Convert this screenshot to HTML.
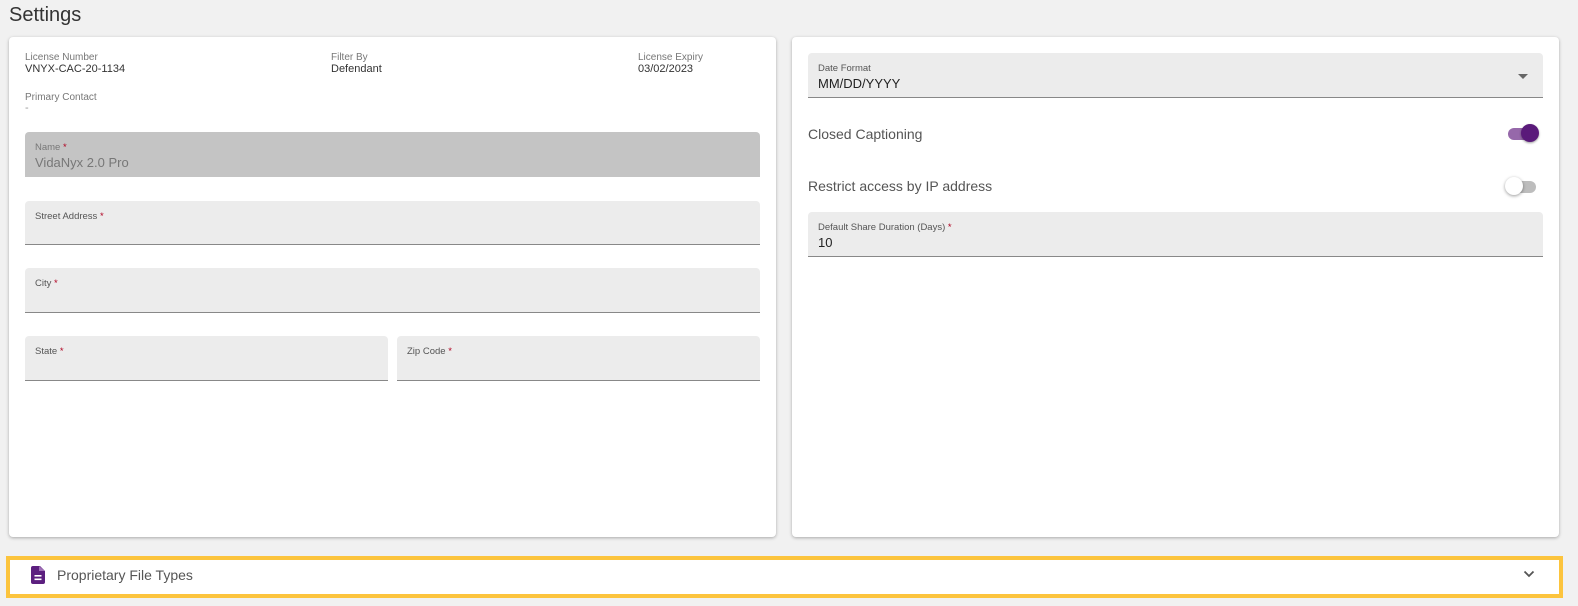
<!DOCTYPE html><html><head><style>
*{box-sizing:border-box;margin:0;padding:0}
body{width:1578px;height:606px;background:#f1f1f1;font-family:"Liberation Sans",sans-serif;position:relative;overflow:hidden;color:#333}
.abs{position:absolute}
.card{position:absolute;background:#fff;border-radius:4px;box-shadow:0 1px 3px rgba(0,0,0,.3)}
.lbl{font-size:10px;color:#777}
.val{font-size:11px;color:#333}
.f{position:absolute;background:#ececec;border-radius:4px 4px 0 0;border-bottom:1px solid #888}
.f .l{position:absolute;left:10px;top:10px;font-size:9.5px;color:#555}
.f .l i{color:#b00020;font-style:normal}
.f .v{position:absolute;left:10px;top:23px;font-size:13px;color:#222}
</style></head><body>
<div class="abs" style="left:9px;top:4px;font-size:20px;color:#333">Settings</div>
<div class="card" style="left:9px;top:37px;width:767px;height:500px"></div>
<div class="card" style="left:792px;top:37px;width:767px;height:500px"></div>
<div class="abs lbl" style="left:25px;top:52px">License Number</div>
<div class="abs val" style="left:25px;top:63px">VNYX-CAC-20-1134</div>
<div class="abs lbl" style="left:331px;top:52px">Filter By</div>
<div class="abs val" style="left:331px;top:63px">Defendant</div>
<div class="abs lbl" style="left:638px;top:52px">License Expiry</div>
<div class="abs val" style="left:638px;top:63px">03/02/2023</div>
<div class="abs lbl" style="left:25px;top:92px">Primary Contact</div>
<div class="abs val" style="left:25px;top:102px;color:#999">-</div>
<div class="f" style="left:25px;top:132px;width:735px;height:45px;background:#c4c4c4;border:none"><span class="l" style="color:#777">Name <i>*</i></span><span class="v" style="color:#777">VidaNyx 2.0 Pro</span></div>
<div class="f" style="left:25px;top:201px;width:735px;height:44px"><span class="l">Street Address <i>*</i></span></div>
<div class="f" style="left:25px;top:268px;width:735px;height:45px"><span class="l">City <i>*</i></span></div>
<div class="f" style="left:25px;top:336px;width:363px;height:45px"><span class="l">State <i>*</i></span></div>
<div class="f" style="left:397px;top:336px;width:363px;height:45px"><span class="l">Zip Code <i>*</i></span></div>
<div class="f" style="left:808px;top:53px;width:735px;height:45px"><span class="l">Date Format</span><span class="v">MM/DD/YYYY</span>
<div class="abs" style="right:15px;top:21px;border-left:5px solid transparent;border-right:5px solid transparent;border-top:5px solid #666"></div></div>
<div class="abs" style="left:808px;top:126px;font-size:14px;color:#555">Closed Captioning</div>
<div class="abs" style="left:808px;top:178px;font-size:14px;color:#555">Restrict access by IP address</div>
<div class="abs" style="left:1508px;top:128px;width:28px;height:12px;border-radius:6px;background:#9668aa"></div>
<div class="abs" style="left:1521px;top:124px;width:18px;height:18px;border-radius:50%;background:#5a1a7a;box-shadow:0 1px 2px rgba(0,0,0,.4)"></div>
<div class="abs" style="left:1508px;top:181px;width:28px;height:12px;border-radius:6px;background:#bdbdbd"></div>
<div class="abs" style="left:1505px;top:177px;width:18px;height:18px;border-radius:50%;background:#fff;box-shadow:0 1px 3px rgba(0,0,0,.4)"></div>
<div class="f" style="left:808px;top:212px;width:735px;height:45px"><span class="l">Default Share Duration (Days) <i>*</i></span><span class="v">10</span></div>
<div class="abs" style="left:6px;top:556px;width:1557px;height:42px;border:4px solid #fcc43d;background:#fff"></div>
<svg class="abs" style="left:31px;top:566px" width="14" height="18" viewBox="0 0 14 18"><path d="M2 0h7l5 5v11a2 2 0 0 1-2 2H2a2 2 0 0 1-2-2V2a2 2 0 0 1 2-2z" fill="#5c1f7f"/><path d="M8 0v5h6z" fill="#a070b8"/><rect x="3.5" y="9" width="7" height="1.6" fill="#fff"/><rect x="3.5" y="12.5" width="7" height="1.6" fill="#fff"/></svg>
<div class="abs" style="left:57px;top:567px;font-size:14px;color:#555">Proprietary File Types</div>
<svg class="abs" style="left:1523px;top:570px" width="12" height="8" viewBox="0 0 12 8"><path d="M1.5 1.5L6 6l4.5-4.5" stroke="#555" stroke-width="1.8" fill="none"/></svg>
</body></html>
